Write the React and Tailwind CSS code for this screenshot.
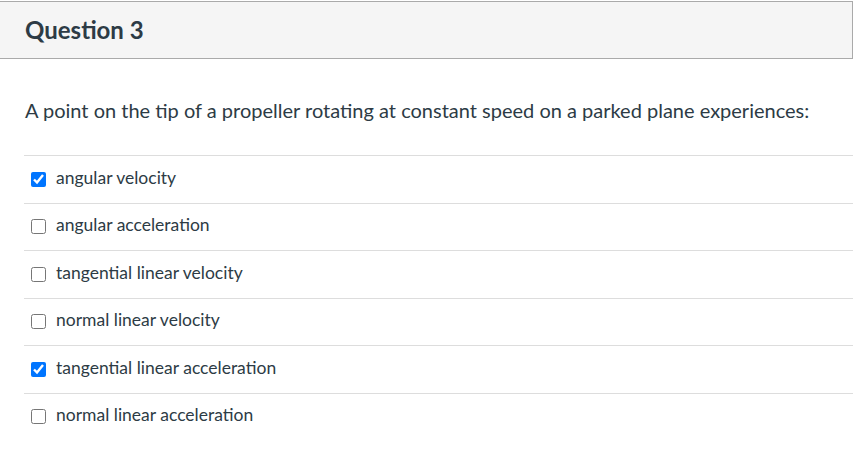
import React from 'react';

const answers = [
  { label: 'angular velocity', checked: true },
  { label: 'angular acceleration', checked: false },
  { label: 'tangential linear velocity', checked: false },
  { label: 'normal linear velocity', checked: false },
  { label: 'tangential linear acceleration', checked: true },
  { label: 'normal linear acceleration', checked: false },
];

const App = () => {
  return (
    <div className="min-h-[453px] bg-white text-[#2d3b45] font-['Lato','Liberation_Sans',sans-serif]">
      {/* Header */}
      <div className="mt-px h-[58px] bg-[#f5f5f5] border-t border-b border-r border-[#aaaaaa] flex items-center pl-[25px]">
        <h2 className="text-[24px] font-bold leading-none">Question 3</h2>
      </div>

      {/* Body */}
      <div className="pl-[24px]">
        <p className="pl-px pt-[39px] pb-[33px] text-[20px] leading-[24px]">
          A point on the tip of a propeller rotating at constant speed on a parked plane experiences:
        </p>
        <div>
          {answers.map((a) => (
            <label
              key={a.label}
              className="flex items-center h-[47.5px] border-t border-[#dddddd] pl-[7px] text-[17.5px]"
            >
              <input
                type="checkbox"
                defaultChecked={a.checked}
                className="w-[15px] h-[15px] m-0 accent-[#0075ff]"
              />
              <span className="ml-[10px] -mt-[3px]">{a.label}</span>
            </label>
          ))}
        </div>
      </div>
    </div>
  );
};

export default App;
